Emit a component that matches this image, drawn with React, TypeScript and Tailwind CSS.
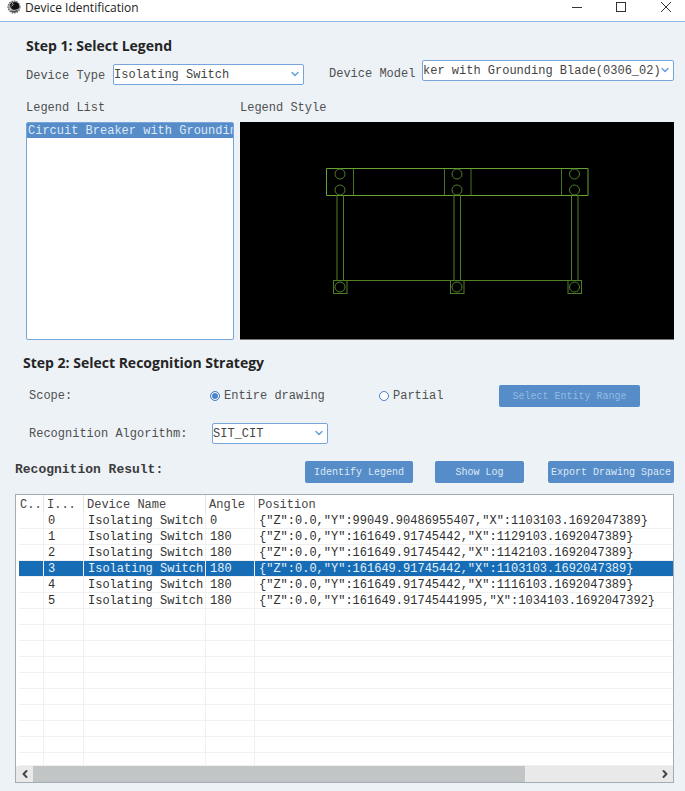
import { useState, type ReactNode } from "react";
import { ChevronDown, ChevronLeft, ChevronRight } from "lucide-react";

interface ResultRow {
  id: number;
  name: string;
  angle: number;
  position: string;
}

const results: ResultRow[] = [
  { id: 0, name: "Isolating Switch", angle: 0, position: '{"Z":0.0,"Y":99049.90486955407,"X":1103103.1692047389}' },
  { id: 1, name: "Isolating Switch", angle: 180, position: '{"Z":0.0,"Y":161649.91745442,"X":1129103.1692047389}' },
  { id: 2, name: "Isolating Switch", angle: 180, position: '{"Z":0.0,"Y":161649.91745442,"X":1142103.1692047389}' },
  { id: 3, name: "Isolating Switch", angle: 180, position: '{"Z":0.0,"Y":161649.91745442,"X":1103103.1692047389}' },
  { id: 4, name: "Isolating Switch", angle: 180, position: '{"Z":0.0,"Y":161649.91745442,"X":1116103.1692047389}' },
  { id: 5, name: "Isolating Switch", angle: 180, position: '{"Z":0.0,"Y":161649.91745441995,"X":1034103.1692047392}' },
];

const emptyRows = [0, 1, 2, 3, 4, 5, 6, 7, 8, 9];

function Combo({ id, value, className }: { id: string; value: string; className: string }) {
  return (
    <div className={`relative ${className}`}>
      <select
        id={id}
        className="block h-[21px] w-full appearance-none rounded-[2px] border border-[#76a5dc] bg-white pr-[11px] pt-px leading-[18px] text-[#444]"
      >
        <option>{value}</option>
      </select>
      <ChevronDown
        size={12}
        strokeWidth={3}
        className="pointer-events-none absolute right-[3px] top-1 text-[#6a9fdc]"
      />
    </div>
  );
}

function ActionButton({ children, className, disabled }: { children: ReactNode; className: string; disabled?: boolean }) {
  return (
    <button
      type="button"
      disabled={disabled}
      className={`h-[22px] rounded-[2px] bg-[#568cc7] pt-[2px] text-[10px] leading-5 whitespace-nowrap text-[#dce9f7] disabled:text-[#94bbe4] ${className}`}
    >
      {children}
    </button>
  );
}

function TitleBar() {
  return (
    <header className="flex h-[22px] items-start border-b border-[#8fb8e2] bg-white pl-[7px] pr-[14px]">
      <svg width="14" height="14" viewBox="0 0 14 14" aria-hidden="true">
        <circle cx="7" cy="7" r="6" fill="#aaa" stroke="#666" strokeWidth="1.2" strokeDasharray="1.5 1" />
        <circle cx="8" cy="6.2" r="4.2" fill="#111" />
        <path d="M3 4.500c.6-1.300 1.500-2 2.800-2.300l.5 2-1.500 1.400L3.200 8z" fill="#222" />
        <path d="M5.200 2.800l1 1.800-1.900 1.900M3 8.800c2 1.800 5 2 8 .6" fill="none" stroke="#ddd" strokeWidth=".8" />
        <path d="M4 10.800c2 1.200 4.600 1.200 6.500-.2" fill="none" stroke="#444" strokeWidth="1.200" />
      </svg>
      <span className="ml-1 flex-1 font-['Open_Sans',sans-serif] text-[12px] leading-4 text-[#222]">
        Device Identification
      </span>
      <div className="flex items-center gap-[34px] pt-[2px] text-[#333]">
        <button type="button" aria-label="Minimize">
          <svg width="10" height="10" viewBox="0 0 10 10" className="block">
            <path d="M0 5.500h10" stroke="currentColor" />
          </svg>
        </button>
        <button type="button" aria-label="Maximize">
          <svg width="11" height="10" viewBox="0 0 11 10" className="block">
            <rect x=".5" y=".5" width="9" height="9" fill="none" stroke="currentColor" />
          </svg>
        </button>
        <button type="button" aria-label="Close">
          <svg width="10" height="10" viewBox="0 0 10 10" className="block">
            <path d="M0 0l10 10M10 0 0 10" stroke="currentColor" />
          </svg>
        </button>
      </div>
    </header>
  );
}

function LegendDrawing() {
  return (
    <svg viewBox="0 0 434 217" className="block h-full w-full" fill="none" stroke="#4f7f24">
      <path d="M86.500 46.500h261.500v27H86.500z" stroke="#65a430" />
      <path d="M113.500 47v26M204.500 47v26M231 47v26M321.500 47v26" stroke="#47731f" />
      <path d="M100 158.500h235" />
      {[100, 217, 334.5].map((x) => (
        <g key={x}>
          <circle cx={x} cy="52" r="5" />
          <circle cx={x} cy="68" r="5" />
          <path d={`M${x - 3} 73v86M${x + 3.500} 73v86`} />
          <rect x={x - 6.500} y="158.500" width="13.5" height="13" />
          <circle cx={x} cy="165" r="5" />
        </g>
      ))}
    </svg>
  );
}

export default function App() {
  const [scope, setScope] = useState("entire");
  const [selected, setSelected] = useState(3);

  const radio =
    "size-[10px] shrink-0 appearance-none rounded-full border border-[#4a85c8] bg-white checked:bg-[#4a85c8] checked:shadow-[inset_0_0_0_1px_white]";
  const cell = "overflow-hidden whitespace-nowrap border-b border-[#f0f0f0] p-0 pl-1 pt-[2px]";

  return (
    <div className="min-h-screen bg-[#edf2f7] font-['Liberation_Mono',monospace] text-[12px] leading-4 text-[#505050]">
      <TitleBar />

      <main className="pb-2 pl-[15px] pr-[11px]">
        <section className="pl-[11px]">
          <h2 className="pt-[14px] font-['Open_Sans',sans-serif] text-[14px] font-bold leading-5 text-[#252525]">
            Step 1: Select Legend
          </h2>
          <div className="mt-1 flex items-start">
            <label htmlFor="type" className="w-[87px] pt-2">
              Device Type
            </label>
            <Combo id="type" value="Isolating Switch" className="mt-1 w-[191px]" />
            <label htmlFor="model" className="ml-[25px] w-[93px] pt-[6px]">
              Device Model
            </label>
            <Combo id="model" value="ker with Grounding Blade(0306_02)" className="min-w-0 flex-1" />
          </div>

          <div className="mt-[15px] flex gap-[6px]">
            <div className="w-[208px]">
              <h3 id="legend-list">Legend List</h3>
              <ul
                aria-labelledby="legend-list"
                className="mt-[6px] h-[218px] rounded-[2px] border border-[#76a5dc] bg-white"
              >
                <li className="overflow-hidden whitespace-nowrap bg-[#568cc7] pl-px pt-px leading-[14px] text-[#dce9f7]">
                  Circuit Breaker with Groundin
                </li>
              </ul>
            </div>
            <div className="min-w-0 flex-1">
              <h3>Legend Style</h3>
              <div className="mt-[6px] h-[218px] border-b border-[#777] bg-black">
                <LegendDrawing />
              </div>
            </div>
          </div>
        </section>

        <section className="pl-2">
          <h2 className="pt-[13px] font-['Open_Sans',sans-serif] text-[14px] font-bold leading-5 text-[#252525]">
            Step 2: Select Recognition Strategy
          </h2>
          <div className="mt-3 flex items-center pl-[6px]">
            <span className="w-[181px]">Scope:</span>
            <label className="flex w-[169px] items-center gap-1">
              <input
                type="radio"
                name="scope"
                className={radio}
                checked={scope === "entire"}
                onChange={() => setScope("entire")}
              />
              Entire drawing
            </label>
            <label className="flex items-center gap-1">
              <input
                type="radio"
                name="scope"
                className={radio}
                checked={scope === "partial"}
                onChange={() => setScope("partial")}
              />
              Partial
            </label>
            <ActionButton disabled className="ml-auto mr-[34px] w-[141px]">
              Select Entity Range
            </ActionButton>
          </div>
          <div className="mt-4 flex items-center pl-[6px]">
            <label htmlFor="algorithm" className="w-[183px]">
              Recognition Algorithm:
            </label>
            <Combo id="algorithm" value="SIT_CIT" className="w-[116px]" />
          </div>
        </section>

        <section>
          <div className="mt-[17px] flex items-center">
            <h2 className="flex-1 pb-1 text-[13px] font-bold text-[#3c3c3c]">Recognition Result:</h2>
            <ActionButton className="mr-[22px] w-[108px]">Identify Legend</ActionButton>
            <ActionButton className="mr-6 w-[89px]">Show Log</ActionButton>
            <ActionButton className="w-[126px]">Export Drawing Space</ActionButton>
          </div>

          <div className="mt-[11px] border border-[#a3abb3] bg-white text-[#2f2f2f]">
            <div className="overflow-hidden pl-[3px]">
              <table className="w-full table-fixed border-separate border-spacing-0 text-left">
                <colgroup>
                  <col className="w-[25px]" />
                  <col className="w-10" />
                  <col className="w-[122px]" />
                  <col className="w-[49px]" />
                  <col />
                </colgroup>
                <thead>
                  <tr className="h-[18px] text-[#444]">
                    {["C..", "I...", "Device Name", "Angle", "Position"].map((title) => (
                      <th
                        key={title}
                        className="border-r border-[#e2e2e2] p-0 pl-[3px] pt-[2px] font-normal leading-4 first:pl-px last:border-r-0"
                      >
                        {title}
                      </th>
                    ))}
                  </tr>
                </thead>
                <tbody>
                  {results.map((row) => (
                    <tr
                      key={row.id}
                      onClick={() => setSelected(row.id)}
                      className={
                        row.id === selected
                          ? "h-4 bg-[#176db5] leading-[13px] text-[#e4f0fa]"
                          : "h-4 leading-[13px]"
                      }
                    >
                      <td className={`${cell} border-r`}></td>
                      <td className={`${cell} border-r`}>{row.id}</td>
                      <td className={`${cell} border-r`}>{row.name}</td>
                      <td className={`${cell} border-r`}>{row.angle}</td>
                      <td className={cell}>{row.position}</td>
                    </tr>
                  ))}
                  {emptyRows.map((n) => (
                    <tr key={n} className="h-4 last:h-[13px]">
                      <td className={`${cell} border-r`}></td>
                      <td className={`${cell} border-r`}></td>
                      <td className={`${cell} border-r`}></td>
                      <td className={`${cell} border-r`}></td>
                      <td className={cell}></td>
                    </tr>
                  ))}
                </tbody>
              </table>
            </div>
            <div className="flex h-4 items-stretch bg-[#e9e9e9] text-[#444]">
              <button type="button" aria-label="Scroll left" className="flex w-[17px] items-center justify-center">
                <ChevronLeft size={12} strokeWidth={4} />
              </button>
              <div className="flex-1">
                <div className="h-full w-[79%] bg-[#c2c5c6]"></div>
              </div>
              <button type="button" aria-label="Scroll right" className="flex w-[17px] items-center justify-center">
                <ChevronRight size={12} strokeWidth={4} />
              </button>
            </div>
          </div>
        </section>
      </main>
    </div>
  );
}
